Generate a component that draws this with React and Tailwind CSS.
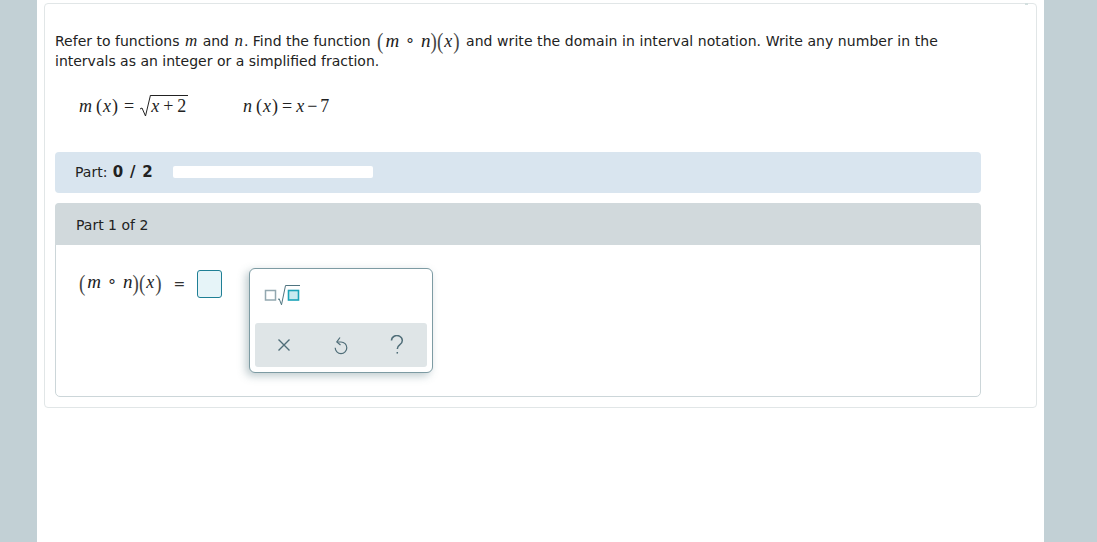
import React from 'react';

const serif = "font-['Liberation_Serif',serif]";

function V({ children }) {
  return <i className={`${serif} text-[17px] mx-[1px]`}>{children}</i>;
}

function Paren({ children }) {
  return <span className="text-[19px] leading-none scale-y-125 text-[#444]">{children}</span>;
}

function Compose({ className }) {
  return (
    <span className={`${serif} inline-flex items-center h-[18px] text-[#222] ${className}`}>
      <Paren>(</Paren>
      <i className="text-[19px] ml-[2px]">m</i>
      <span className="text-[16px] mx-[6px]">∘</span>
      <i className="text-[19px]">n</i>
      <Paren>)</Paren>
      <Paren>(</Paren>
      <i className="text-[18px] mx-[1px]">x</i>
      <Paren>)</Paren>
    </span>
  );
}

function SqrtIcon() {
  return (
    <svg width="37" height="24" viewBox="0 0 37 24" fill="none">
      <rect x="1.500" y="7.500" width="10" height="9.500" fill="#fff" stroke="#93a8b0" strokeWidth="1.500" />
      <path d="M14 16.500l1.200-.7 2.300 6L21.500 2.500H36" stroke="#4f7480" strokeWidth="1" />
      <rect x="24.500" y="7.500" width="10" height="9.500" fill="#c8eaf0" stroke="#1ba3b8" strokeWidth="1.600" />
    </svg>
  );
}

function Palette() {
  return (
    <div className="w-[184px] h-[105px] ml-[27px] bg-white border border-[#7d9ba3] rounded-[6px] shadow-[-3px_3px_8px_rgba(70,105,115,0.35)] px-[5px] pt-[5px]">
      <div className="h-[49px] pl-[9px] pt-[9px]">
        <SqrtIcon />
      </div>
      <div className="h-[44px] bg-[#dfe5e7] rounded-[3px] flex items-center text-[#4f6d78]">
        <div className="w-[57px] flex justify-center">
          <svg width="14" height="14" viewBox="0 0 14 14" fill="none" stroke="currentColor" strokeWidth="1.400">
            <path d="M1.500 1.500l11 11M12.500 1.500l-11 11" />
          </svg>
        </div>
        <div className="w-[56px] ml-[1px] flex justify-center">
          <svg width="16" height="19" viewBox="0 0 16 19" fill="none" stroke="currentColor" strokeWidth="1.200">
            <path d="M4 6h4a5.800 5.800 0 1 1-5.800 5.800" />
            <path d="M7 1.500L3.800 6 7.500 9" />
          </svg>
        </div>
        <div className="w-[56px] flex justify-center">
          <svg width="14" height="20" viewBox="0 0 14 20" fill="none" stroke="currentColor" strokeWidth="1.500">
            <path d="M1.500 5.500a5.400 5 0 1 1 8.400 4.200c-1.800 1.300-2.600 2.200-2.600 4.300" />
            <path d="M7.300 17v1.600" />
          </svg>
        </div>
      </div>
    </div>
  );
}

export default function App() {
  return (
    <div className="h-[542px] bg-[#c2d0d5] pl-[37px] pr-[53px] font-['DejaVu_Sans',sans-serif] text-[14px] text-[#222] overflow-hidden">
      <div className="h-full bg-white pt-[3px] px-[7px]">
        <div className="relative h-[405px] border border-[#e1e6e7] rounded-[4px] pt-[27px] pl-[10px] pr-[55px]">
          <div className="absolute right-[8px] top-[-1px] w-[3px] h-[2px] bg-[#d3dfdf]" />
          <p className="leading-[20px] w-[900px]">
            Refer to functions <V>m</V> and <V>n</V>. Find the function <Compose className="mx-[2px] align-[-1px]" /> <span className="tracking-[0.06px]">and write the domain in interval notation. Write any number in the</span> intervals as an integer or a simplified fraction.
          </p>

          <div className={`${serif} flex items-center h-[30px] mt-[20px] pl-[24px] text-[18px] text-[#222] tracking-[1px]`}>
            <span className="w-[164px] flex items-center">
              <i>m</i>
              <span className="ml-[3px]">(</span>
              <i>x</i>
              <span>)</span>
              <span className="mx-[5px]">=</span>
              <span className="flex items-center">
                <svg width="11" height="24" viewBox="0 0 11 24" fill="none" stroke="#222" strokeWidth="1">
                  <path d="M0 15l2-1 3.500 8L10.500 1" />
                </svg>
                <span className="border-t border-[#222] pr-[1px] leading-[21px] mt-[-1px]"><i>x</i><span className="mx-[3px]">+</span>2</span>
              </span>
            </span>
            <span className="flex items-center">
              <i>n</i>
              <span className="ml-[3px]">(</span>
              <i>x</i>
              <span>)</span>
              <span className="mx-[3px]">=</span>
              <i>x</i>
              <span className="mx-[2px]">−</span>
              <span>7</span>
            </span>
          </div>

          <div className="h-[41px] mt-[31px] bg-[#d9e5ef] rounded-[4px] flex items-center pl-[20px]">
            <span className="w-[98px] whitespace-nowrap">Part: <b className="text-[15px] tracking-[0.8px] ml-[1px]">0 / 2</b></span>
            <div className="w-[200px] h-[12px] mb-[1px] bg-white rounded-[2px]" />
          </div>

          <div className="h-[194px] mt-[10px] border border-[#ccd6d9] rounded-[5px]">
            <div className="h-[42px] bg-[#d1d9dc] rounded-t-[4px] mt-[-1px] mx-[-1px] flex items-center pl-[21px] pt-[2px]">Part 1 of 2</div>
            <div className="flex pt-[23px] pl-[23px]">
              <div className="flex items-start">
                <Compose className="mt-[5px]" />
                <span className="ml-[12px] mt-[6px] text-[#333]">=</span>
                <div className="w-[25px] h-[28px] ml-[12px] mt-[2px] bg-[#e6f4f8] border border-[#1f7f95] rounded-[3px]" />
              </div>
              <Palette />
            </div>
          </div>
        </div>
      </div>
    </div>
  );
}
